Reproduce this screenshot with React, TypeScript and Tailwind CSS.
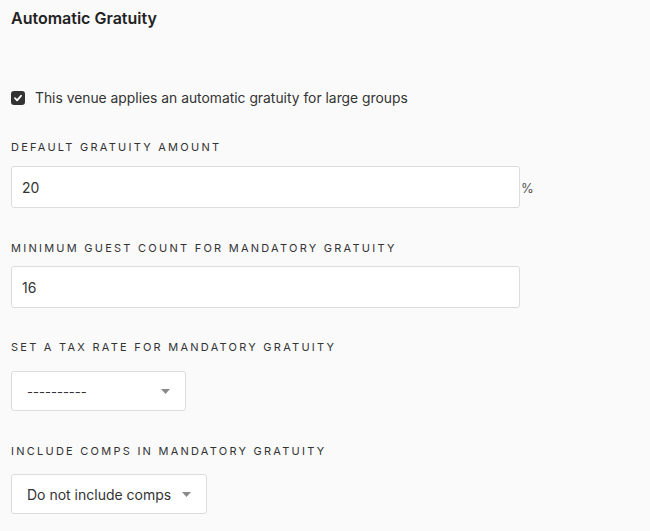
import React from "react";

function Label({ children }: { children: React.ReactNode }) {
  return (
    <div className="text-[11px] leading-[14px] tracking-[2.25px] text-[#333] uppercase">{children}</div>
  );
}

function Caret() {
  return (
    <svg width="9" height="5" viewBox="0 0 9 5" className="shrink-0">
      <path d="M0 0 L9 0 L4.5 5 Z" fill="#8a8a8a" />
    </svg>
  );
}

export default function App() {
  return (
    <div
      className="w-[650px] h-[531px] bg-[#fafafa] text-[#333] overflow-hidden"
      style={{ fontFamily: "Inter, 'Noto Sans', sans-serif" }}
    >
      <div className="pl-[11px] pt-[9px]">
        <h2 className="text-[16px] leading-[18px] font-semibold text-[#222]">Automatic Gratuity</h2>

        <label className="mt-[62px] flex items-center gap-[10px]">
          <span className="w-[14px] h-[14px] rounded-[3px] bg-[#333] flex items-center justify-center">
            <svg width="10" height="10" viewBox="0 0 10 10">
              <path d="M2 5.2 L4.1 7.3 L8 2.8" stroke="white" strokeWidth="1.8" fill="none" strokeLinecap="round" strokeLinejoin="round" />
            </svg>
          </span>
          <span className="text-[13.85px] leading-[18px] text-[#333]">This venue applies an automatic gratuity for large groups</span>
        </label>

        <div className="mt-[33px]">
          <Label>Default Gratuity Amount</Label>
          <div className="mt-[12px] flex items-center">
            <div className="w-[509px] h-[42px] bg-white border border-[#dcdcdc] rounded-[3px] flex items-center pl-[10px] text-[14px] text-[#333]">20</div>
            <span className="ml-[1px] mt-[4px] text-[13px] text-[#555]">%</span>
          </div>
        </div>

        <div className="mt-[33px]">
          <Label>Minimum Guest Count for Mandatory Gratuity</Label>
          <div className="mt-[11px] w-[509px] h-[42px] bg-white border border-[#dcdcdc] rounded-[3px] flex items-center pl-[10px] text-[14px] text-[#333]">16</div>
        </div>

        <div className="mt-[32px]">
          <Label>Set a Tax Rate for Mandatory Gratuity</Label>
          <div className="mt-[17px] w-[175px] h-[40px] bg-white border border-[#dcdcdc] rounded-[3px] flex items-center justify-between pl-[15px] pr-[15px]">
            <span className="text-[13px] text-[#333] pt-[4px]">----------</span>
            <Caret />
          </div>
        </div>

        <div className="mt-[33px]">
          <Label>Include Comps in Mandatory Gratuity</Label>
          <div className="mt-[16px] w-[196px] h-[40px] bg-white border border-[#dcdcdc] rounded-[3px] flex items-center justify-between pl-[15px] pr-[15px]">
            <span className="text-[14px] text-[#333]">Do not include comps</span>
            <Caret />
          </div>
        </div>
      </div>
    </div>
  );
}
